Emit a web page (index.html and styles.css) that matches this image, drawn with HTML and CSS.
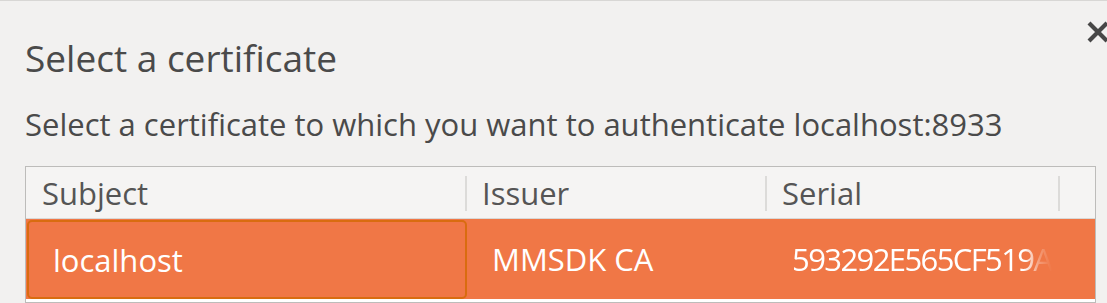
FILE: index.html
```html
<!DOCTYPE html>
<html>
<head>
<meta charset="utf-8">
<link rel="stylesheet" href="styles.css">
</head>
<body>
<div class="dialog">
  <div class="titlebar">
    <h1 class="title">Select a certificate</h1>
    <button class="close" aria-label="Close">
      <svg width="24" height="24" viewBox="0 0 24 24"><path d="M3 3 L21 21 M21 3 L3 21" stroke="#474747" stroke-width="4.2" stroke-linecap="butt" fill="none"/></svg>
    </button>
  </div>
  <p class="subtitle">Select a certificate to which you want to authenticate localhost:8933</p>
  <div class="table">
    <div class="thead">
      <div class="th c1"><span>Subject</span></div>
      <div class="th c2"><span>Issuer</span></div>
      <div class="th c3"><span>Serial</span></div>
      <div class="th c4"></div>
    </div>
    <div class="row selected">
      <div class="td c1 focus">localhost</div>
      <div class="td c2">MMSDK CA</div>
      <div class="td c3 fade">593292E565CF519A</div>
      <div class="td c4"></div>
    </div>
    <div class="row empty"></div>
  </div>
</div>
</body>
</html>
```

FILE: styles.css
```css
html, body {
  margin: 0;
  padding: 0;
  height: 100%;
  overflow: hidden;
}
body {
  background: #f2f1f0;
  border-top: 1px solid #d8d7d5;
  box-sizing: border-box;
  font-family: "Open Sans", "Noto Sans", sans-serif;
  color: #4c4c4c;
}
.dialog {
  padding: 35px 11px 0 25px;
}
.titlebar {
  display: flex;
  justify-content: space-between;
  align-items: flex-start;
}
.title {
  margin: 0;
  font-size: 37px;
  line-height: 44px;
  font-weight: 400;
  color: #4a4a4a;
}
.close {
  border: 0;
  background: transparent;
  padding: 0;
  margin: -16px -14px 0 0;
  width: 24px;
  height: 24px;
  display: block;
}
.close svg { display: block; }
.subtitle {
  margin: 26px 0 0 0;
  font-size: 31px;
  line-height: 36px;
  color: #4a4a4a;
}
.table {
  margin-top: 24px;
  border: 1px solid #bdbcba;
  background: #ffffff;
}
.thead, .row {
  display: grid;
  grid-template-columns: 439px 300px 293px 1fr;
}
.thead {
  height: 51px;
  background: #f5f4f3;
  border-bottom: 1px solid #d9d8d6;
}
.th {
  display: flex;
  align-items: center;
  font-size: 31px;
  color: #555555;
  padding-left: 16px;
  position: relative;
}
.th.c2::before, .th.c3::before, .th.c4::before {
  content: "";
  position: absolute;
  left: 0;
  top: 9px;
  bottom: 7px;
  width: 2px;
  background: #dcdbd9;
}
.th.c2, .th.c3 { padding-left: 17px; }
.row.selected {
  height: 80px;
  background: #f07746;
  color: #ffffff;
}
.td {
  display: flex;
  align-items: center;
  font-size: 31px;
  padding-left: 27px;
  white-space: nowrap;
  overflow: hidden;
  box-sizing: border-box;
}
.td.focus {
  border: 2px solid #d96c10;
  border-radius: 5px;
  margin: 1px -2px 0 1px;
  padding-left: 24px;
}
.td.fade {
  letter-spacing: -1.6px;
  -webkit-mask-image: linear-gradient(to right, #000 calc(100% - 34px), rgba(0,0,0,0.25) calc(100% - 18px), transparent calc(100% - 6px));
  mask-image: linear-gradient(to right, #000 calc(100% - 34px), rgba(0,0,0,0.25) calc(100% - 18px), transparent calc(100% - 6px));
}
.row.empty {
  height: 3px;
  background: #ffffff;
}
```
